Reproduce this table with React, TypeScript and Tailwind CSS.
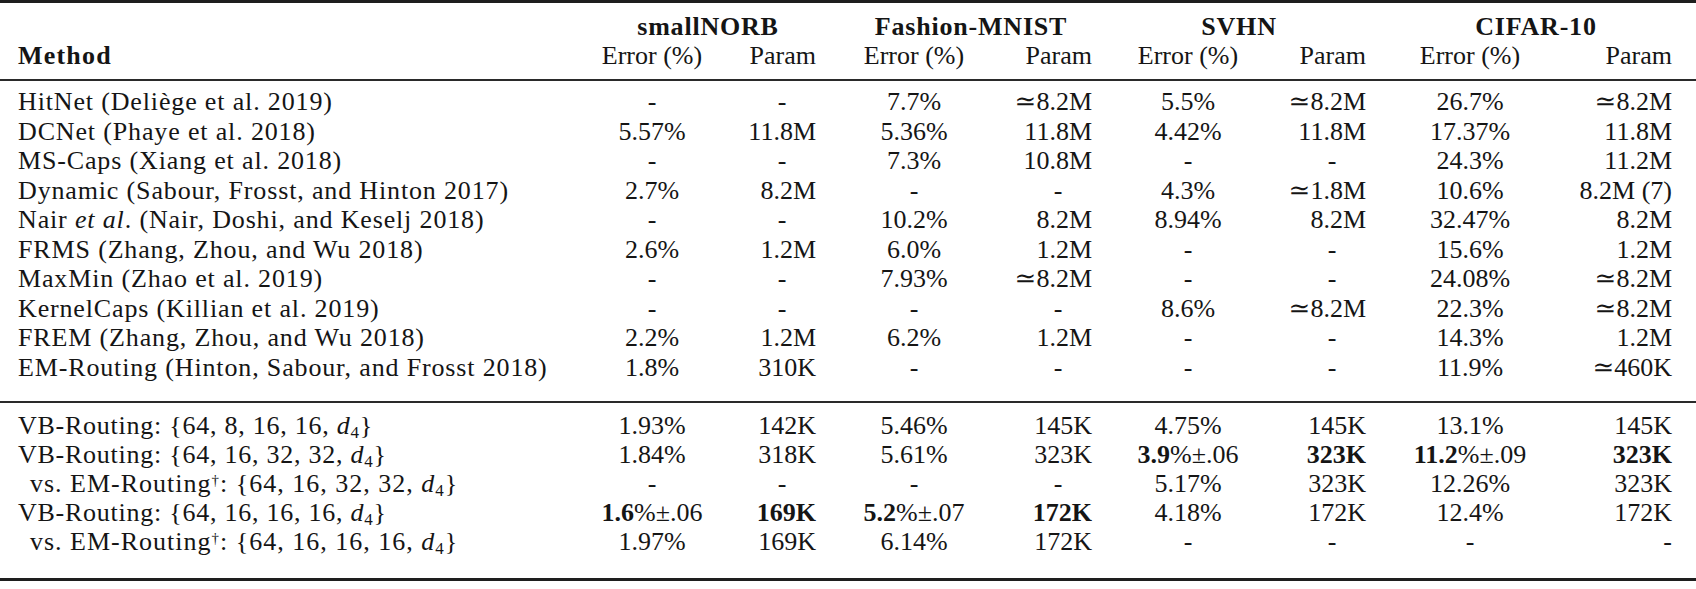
import React from "react";

type Cell = string | { b?: string; r?: string };

interface Row {
  method: React.ReactNode;
  indent?: boolean;
  cells: Cell[];
}

// {64, a, b, c, d_4} written the way the paper sets it in math mode
const cfg = (a: string, b: string, c: string) => (
  <>
    {"{"}64, {a}, {b}, {c}, <i>d</i>
    <sub className="text-[17px] leading-none">4</sub>
    {"}"}
  </>
);

const baselines: Row[] = [
  { method: "HitNet (Deliège et al. 2019)", cells: ["-", "-", "7.7%", "≃8.2M", "5.5%", "≃8.2M", "26.7%", "≃8.2M"] },
  { method: "DCNet (Phaye et al. 2018)", cells: ["5.57%", "11.8M", "5.36%", "11.8M", "4.42%", "11.8M", "17.37%", "11.8M"] },
  { method: "MS-Caps (Xiang et al. 2018)", cells: ["-", "-", "7.3%", "10.8M", "-", "-", "24.3%", "11.2M"] },
  { method: "Dynamic (Sabour, Frosst, and Hinton 2017)", cells: ["2.7%", "8.2M", "-", "-", "4.3%", "≃1.8M", "10.6%", "8.2M (7)"] },
  {
    method: (
      <>
        Nair <i>et al</i>. (Nair, Doshi, and Keselj 2018)
      </>
    ),
    cells: ["-", "-", "10.2%", "8.2M", "8.94%", "8.2M", "32.47%", "8.2M"],
  },
  { method: "FRMS (Zhang, Zhou, and Wu 2018)", cells: ["2.6%", "1.2M", "6.0%", "1.2M", "-", "-", "15.6%", "1.2M"] },
  { method: "MaxMin (Zhao et al. 2019)", cells: ["-", "-", "7.93%", "≃8.2M", "-", "-", "24.08%", "≃8.2M"] },
  { method: "KernelCaps (Killian et al. 2019)", cells: ["-", "-", "-", "-", "8.6%", "≃8.2M", "22.3%", "≃8.2M"] },
  { method: "FREM (Zhang, Zhou, and Wu 2018)", cells: ["2.2%", "1.2M", "6.2%", "1.2M", "-", "-", "14.3%", "1.2M"] },
  { method: "EM-Routing (Hinton, Sabour, and Frosst 2018)", cells: ["1.8%", "310K", "-", "-", "-", "-", "11.9%", "≃460K"] },
];

const ours: Row[] = [
  {
    method: <>VB-Routing: {cfg("8", "16", "16")}</>,
    cells: ["1.93%", "142K", "5.46%", "145K", "4.75%", "145K", "13.1%", "145K"],
  },
  {
    method: <>VB-Routing: {cfg("16", "32", "32")}</>,
    cells: ["1.84%", "318K", "5.61%", "323K", { b: "3.9", r: "%±.06" }, { b: "323K" }, { b: "11.2", r: "%±.09" }, { b: "323K" }],
  },
  {
    method: (
      <>
        vs. EM-Routing<sup className="text-[15px]">†</sup>: {cfg("16", "32", "32")}
      </>
    ),
    indent: true,
    cells: ["-", "-", "-", "-", "5.17%", "323K", "12.26%", "323K"],
  },
  {
    method: <>VB-Routing: {cfg("16", "16", "16")}</>,
    cells: [{ b: "1.6", r: "%±.06" }, { b: "169K" }, { b: "5.2", r: "%±.07" }, { b: "172K" }, "4.18%", "172K", "12.4%", "172K"],
  },
  {
    method: (
      <>
        vs. EM-Routing<sup className="text-[15px]">†</sup>: {cfg("16", "16", "16")}
      </>
    ),
    indent: true,
    cells: ["1.97%", "169K", "6.14%", "172K", "-", "-", "-", "-"],
  },
];

const grid =
  "grid grid-cols-[590px_124px_112px_176px_100px_172px_102px_188px_132px]";

function Value({ cell }: { cell: Cell }) {
  if (typeof cell === "string") return <>{cell}</>;
  return (
    <>
      {cell.b && <span className="font-bold">{cell.b}</span>}
      {cell.r}
    </>
  );
}

function DataCell({ cell, col }: { cell: Cell; col: number }) {
  const isParam = col % 2 === 1;
  const last = col === 7;
  if (!isParam) {
    return (
      <div className="text-center whitespace-nowrap">
        <Value cell={cell} />
      </div>
    );
  }
  if (cell === "-" && !last) {
    return (
      <div className="flex justify-end pr-[10px]">
        <span className="inline-block w-[68px] text-center">-</span>
      </div>
    );
  }
  return (
    <div className={`text-right whitespace-nowrap ${last ? "pr-[24px]" : "pr-[10px]"}`}>
      <Value cell={cell} />
    </div>
  );
}

function TableRow({ row, cited }: { row: Row; cited?: boolean }) {
  let method = "pl-[18px] tracking-[0.75px]";
  if (cited) method = "pl-[18px] tracking-[0.85px]";
  if (row.indent) method = "pl-[30px] tracking-[1px]";
  return (
    <div className={`${grid} ${cited ? "h-[29.5px]" : "h-[29px]"} items-center`}>
      <div className={`whitespace-nowrap ${method}`}>{row.method}</div>
      {row.cells.map((c, i) => (
        <DataCell key={i} cell={c} col={i} />
      ))}
    </div>
  );
}

export default function App() {
  return (
    <div className="w-[1696px] h-[589px] bg-white text-[#151515] text-[26px] leading-[29px] [font-family:'Liberation_Serif','DejaVu_Serif',serif]">
      <div className="border-t-[3px] border-[#1e1e1e]">
        {/* Header */}
        <div className="pt-[9px] pb-[9px] border-b-2 border-[#2a2a2a]">
          <div className={`${grid} h-[29px] font-bold tracking-[0.8px]`}>
            <div />
            <div className="col-span-2 text-center">smallNORB</div>
            <div className="col-span-2 text-center pl-[14px]">Fashion-MNIST</div>
            <div className="col-span-2 text-center">SVHN</div>
            <div className="col-span-2 text-center">CIFAR-10</div>
          </div>
          <div className={`${grid} h-[29px]`}>
            <div className="pl-[18px] font-bold tracking-[1.2px]">Method</div>
            <div className="text-center">Error (%)</div>
            <div className="text-right pr-[10px]">Param</div>
            <div className="text-center">Error (%)</div>
            <div className="text-right pr-[10px]">Param</div>
            <div className="text-center">Error (%)</div>
            <div className="text-right pr-[10px]">Param</div>
            <div className="text-center">Error (%)</div>
            <div className="text-right pr-[24px]">Param</div>
          </div>
        </div>

        {/* Prior capsule methods */}
        <div className="pt-[6px] pb-[19px] border-b-2 border-[#2a2a2a]">
          {baselines.map((r, i) => (
            <TableRow key={i} row={r} cited />
          ))}
        </div>

        {/* VB-Routing */}
        <div className="pt-[8px] pb-[22px] border-b-[3px] border-[#1e1e1e]">
          {ours.map((r, i) => (
            <TableRow key={i} row={r} />
          ))}
        </div>
      </div>
    </div>
  );
}
